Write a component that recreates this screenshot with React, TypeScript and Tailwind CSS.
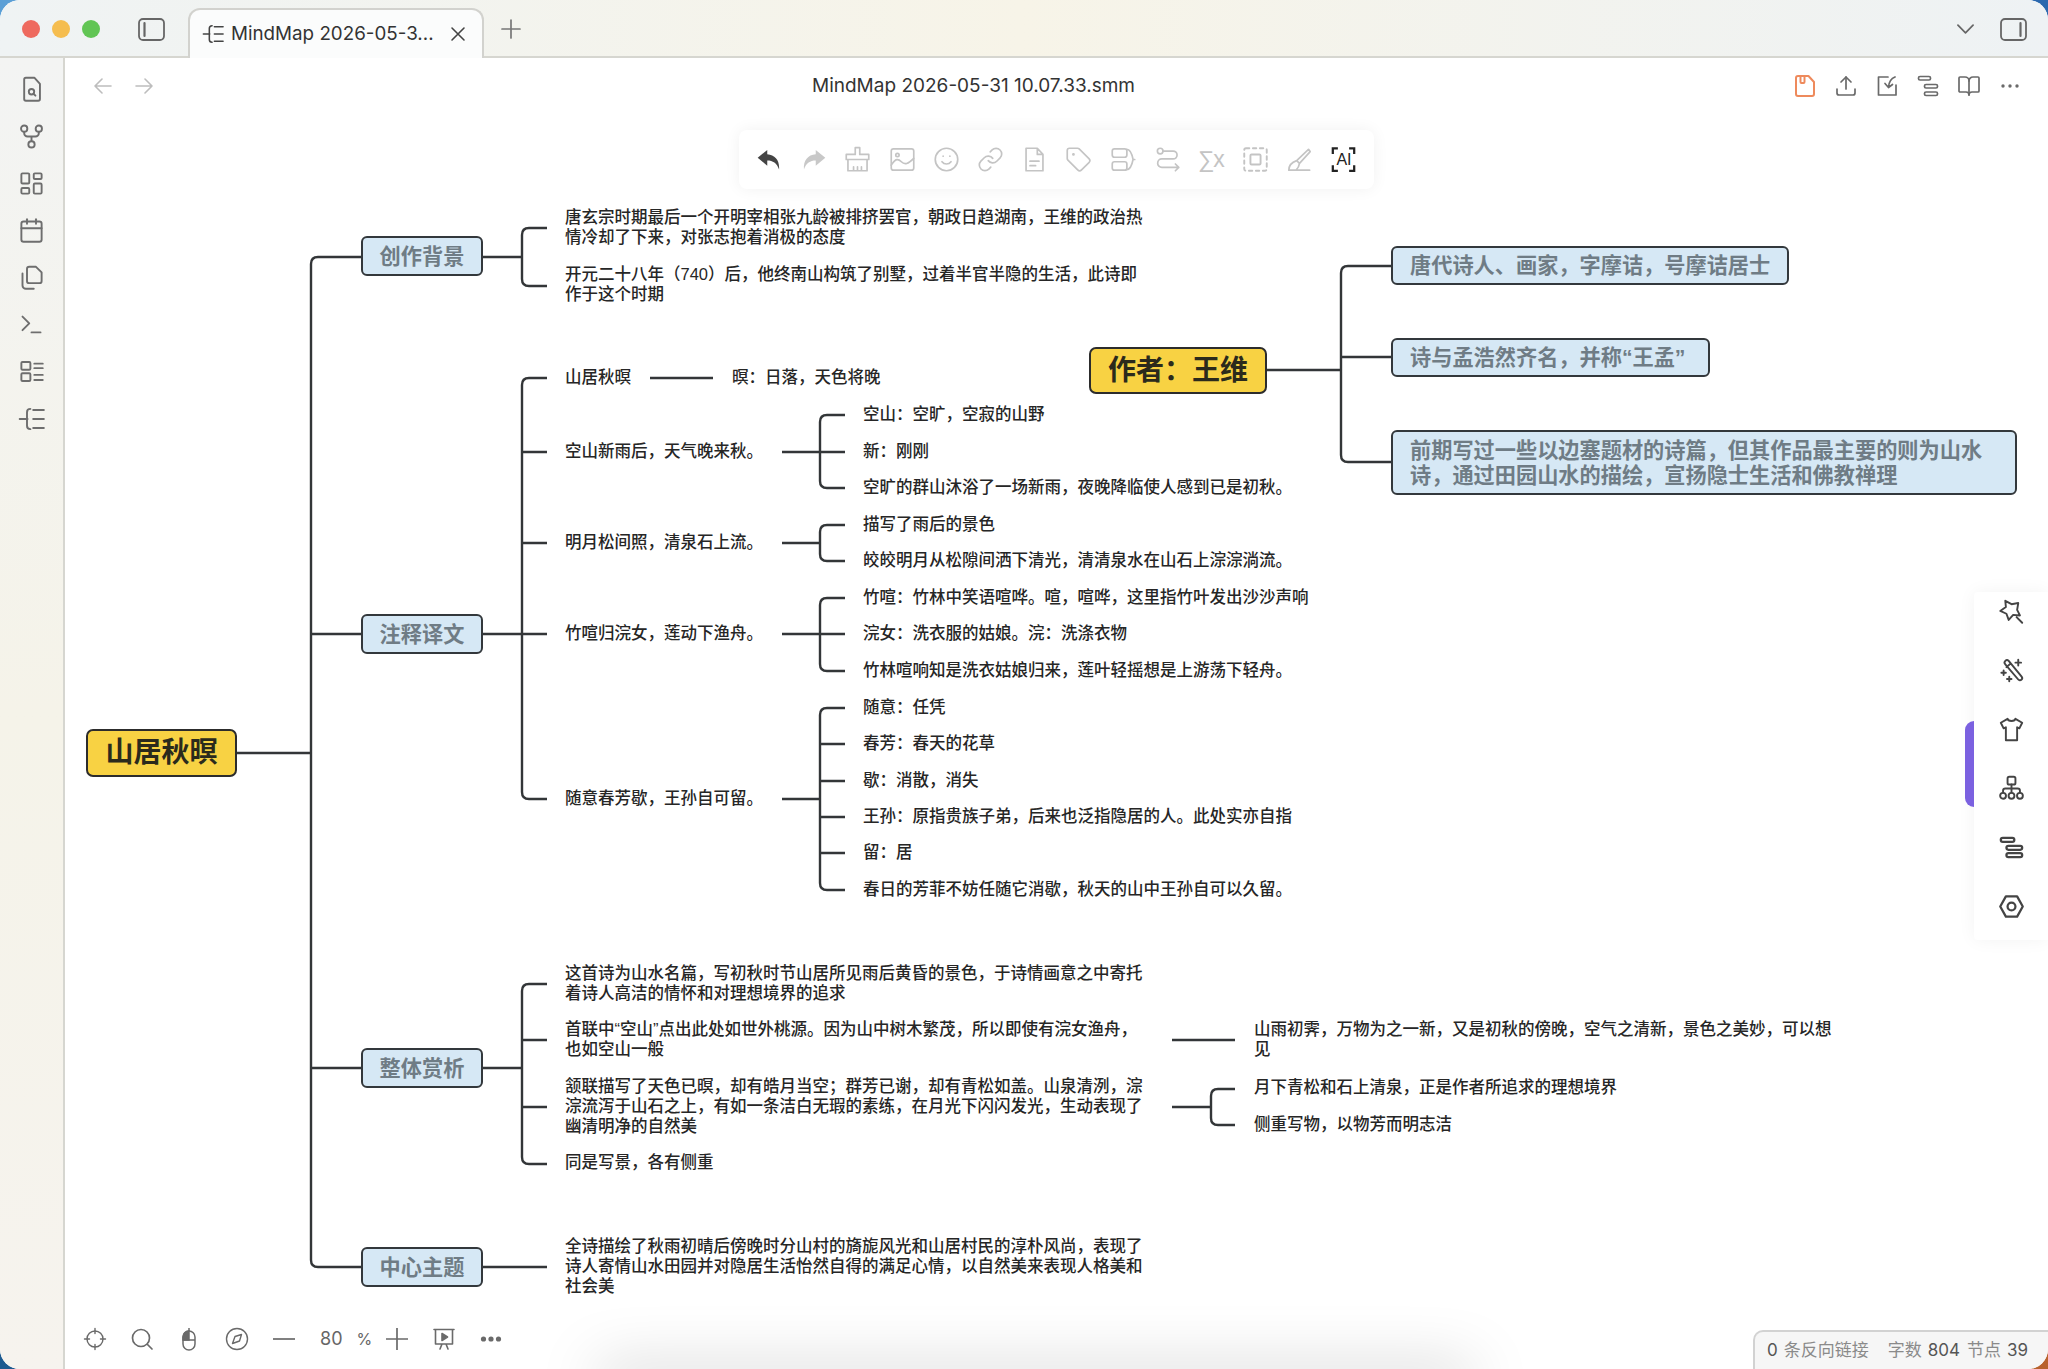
import { ReactNode } from "react";
import { BookOpen, Calendar, LayoutDashboard, Link, Smile, Tag, Terminal, Upload } from "lucide-react";

const Ic = ({ className, sw = 1.7, children }: { className?: string; sw?: number; children: ReactNode }) => (
  <svg viewBox="0 0 24 24" fill="none" stroke="currentColor" strokeWidth={sw} strokeLinecap="round" strokeLinejoin="round" className={className}>
    {children}
  </svg>
);

const MindIcon = ({ className }: { className?: string }) => (
  <Ic className={className}>
    <path d="M1.500 12h7M11 3c-2 0-3 1-3 3v12c0 2 1 3 3 3M13.500 4H23M13.500 12H23M13.500 20H23" />
  </Ic>
);

const sideIcon = "w-[27px] h-[27px]";
const sideItems = [
  <Ic className={sideIcon}>
    <path d="M7 1.500h7.500L19.500 7V20.500a1.500 1.500 0 0 1-1.500 1.500H7A1.500 1.500 0 0 1 5.500 20.500V3A1.500 1.500 0 0 1 7 1.500z" />
    <circle cx="12" cy="14" r="2.400" />
    <path d="M14 16l1.500 1.500" />
  </Ic>,
  <Ic className={sideIcon}>
    <circle cx="5.500" cy="5" r="2.800" />
    <circle cx="18.500" cy="5" r="2.800" />
    <circle cx="12" cy="19" r="2.800" />
    <path d="M5.500 8v1a3 3 0 0 0 3 3h7a3 3 0 0 0 3-3V8M12 12v4" />
  </Ic>,
  <LayoutDashboard className={sideIcon} strokeWidth={1.7} />,
  <Calendar className={sideIcon} strokeWidth={1.7} />,
  <Ic className={sideIcon}>
    <path d="M4 8.500V19a3 3 0 0 0 3 3h7" />
    <path d="M10 2.500h6l5 5V15a2 2 0 0 1-2 2h-9a2 2 0 0 1-2-2V4.500a2 2 0 0 1 2-2z" />
  </Ic>,
  <Terminal className={sideIcon} strokeWidth={1.7} />,
  <Ic className={sideIcon}>
    <rect x="3" y="3.500" width="8" height="7" rx="1" />
    <rect x="3" y="13.500" width="8" height="7" rx="1" />
    <path d="M14.500 5H22M14.500 9H22M14.500 15H22M14.500 19.500H22" />
  </Ic>,
  <MindIcon className="w-[28px] h-[28px]" />,
];

const tool = "w-[27px] h-[27px]";
const toolItems: { key: string; cls: string; el: ReactNode }[] = [
  {
    key: "undo",
    cls: "text-[#444444]",
    el: (
      <svg viewBox="0 0 24 24" className={tool} fill="currentColor">
        <path d="M10 3.500 1.500 10.500 10 17.500v-4.600c5 0 8.500 2.200 10.500 8 .6-8-3.500-13-10.500-13.500z" />
      </svg>
    ),
  },
  {
    key: "redo",
    cls: "text-[#c8c8c8]",
    el: (
      <svg viewBox="0 0 24 24" className={tool} fill="currentColor">
        <path d="M14 3.500 22.500 10.500 14 17.500v-4.600c-5 0-8.500 2.200-10.500 8C2.900 12.900 7 7.900 14 7.400z" />
      </svg>
    ),
  },
  {
    key: "brush",
    cls: "text-[#c4c4c4]",
    el: (
      <Ic className={tool} sw={1.5}>
        <path d="M10 1.500h4V7.500h8V12H2V7.500h8zM3.500 12v10h17V12M8.500 22v-3.500M12 22v-3.500M15.500 22v-3.500" />
      </Ic>
    ),
  },
  {
    key: "image",
    cls: "text-[#c4c4c4]",
    el: (
      <Ic className={tool} sw={1.5}>
        <rect x="2" y="2.500" width="20" height="19" rx="2" />
        <circle cx="7.500" cy="8" r="1.500" />
        <path d="M2 17c4-6 6-6 9-3s6 2 11-3" />
      </Ic>
    ),
  },
  { key: "smile", cls: "text-[#c4c4c4]", el: <Smile className={tool} strokeWidth={1.5} /> },
  { key: "link", cls: "text-[#c4c4c4]", el: <Link className={tool} strokeWidth={1.5} /> },
  {
    key: "file",
    cls: "text-[#c4c4c4]",
    el: (
      <Ic className={tool} sw={1.5}>
        <path d="M4.500 2h10l5 5.500V22h-15zM14.500 2v5.500h5M8 13.500h8M8 17.500h5" />
      </Ic>
    ),
  },
  { key: "tag", cls: "text-[#c4c4c4]", el: <Tag className={tool} strokeWidth={1.5} /> },
  {
    key: "summary",
    cls: "text-[#c4c4c4]",
    el: (
      <Ic className={tool} sw={1.5}>
        <rect x="2" y="2.500" width="13" height="7.500" rx="2" />
        <rect x="2" y="14" width="13" height="7.500" rx="2" />
        <path d="M15 3c3 0 4.500 4 5.500 9-1 5-2.500 9-5.500 9M20.500 12h1.500" />
      </Ic>
    ),
  },
  {
    key: "relation",
    cls: "text-[#c4c4c4]",
    el: (
      <Ic className={tool} sw={1.5}>
        <circle cx="5.500" cy="4.500" r="2.500" />
        <path d="M8 4.500h9a3.500 3.500 0 0 1 0 7H7a3.500 3.500 0 0 0 0 7.500h15M19 16l3 3-3 3" />
      </Ic>
    ),
  },
  {
    key: "formula",
    cls: "text-[#c4c4c4]",
    el: <span className="w-[27px] text-[23px] leading-[27px] font-['Liberation_Sans',sans-serif] font-light tracking-[-1px] whitespace-nowrap">∑x</span>,
  },
  {
    key: "select",
    cls: "text-[#c4c4c4]",
    el: (
      <Ic className={tool} sw={1.7}>
        <rect x="2" y="2" width="20" height="20" rx="1.500" strokeDasharray="3 3.200" />
        <rect x="7.500" y="7.500" width="9" height="9" rx="1" />
      </Ic>
    ),
  },
  {
    key: "pen",
    cls: "text-[#c4c4c4]",
    el: (
      <Ic className={tool} sw={1.5}>
        <path d="M20 3 9.500 13l2.500 2.500L21.500 5zM2.500 21.500c0-4 2.500-7 7-8.500l2.500 2.500c-.5 3-2 5-3 6zM2.500 21.500H21" />
      </Ic>
    ),
  },
  {
    key: "ai",
    cls: "text-[#222222]",
    el: (
      <div className="relative flex w-[27px] h-[27px] items-center justify-center">
        <svg viewBox="0 0 24 24" className="absolute inset-0 w-[27px] h-[27px]" fill="none" stroke="currentColor" strokeWidth="2">
          <path d="M7 2H2.500v5M17 2h4.500v5M7 22H2.500v-5M17 22h4.500v-5" />
        </svg>
        <span className="text-[16px] leading-none font-['Liberation_Sans',sans-serif]">AI</span>
      </div>
    ),
  },
];

const leaves: { x: number; y: number; lines: string[] }[] = [
  { x: 565, y: 228, lines: ["唐玄宗时期最后一个开明宰相张九龄被排挤罢官，朝政日趋湖南，王维的政治热", "情冷却了下来，对张志抱着消极的态度"] },
  { x: 565, y: 285, lines: ["开元二十八年（740）后，他终南山构筑了别墅，过着半官半隐的生活，此诗即", "作于这个时期"] },
  { x: 565, y: 378, lines: ["山居秋暝"] },
  { x: 732, y: 378, lines: ["暝：日落，天色将晚"] },
  { x: 565, y: 452, lines: ["空山新雨后，天气晚来秋。"] },
  { x: 863, y: 415, lines: ["空山：空旷，空寂的山野"] },
  { x: 863, y: 452, lines: ["新：刚刚"] },
  { x: 863, y: 488, lines: ["空旷的群山沐浴了一场新雨，夜晚降临使人感到已是初秋。"] },
  { x: 565, y: 543, lines: ["明月松间照，清泉石上流。"] },
  { x: 863, y: 525, lines: ["描写了雨后的景色"] },
  { x: 863, y: 561, lines: ["皎皎明月从松隙间洒下清光，清清泉水在山石上淙淙淌流。"] },
  { x: 565, y: 634, lines: ["竹喧归浣女，莲动下渔舟。"] },
  { x: 863, y: 598, lines: ["竹喧：竹林中笑语喧哗。喧，喧哗，这里指竹叶发出沙沙声响"] },
  { x: 863, y: 634, lines: ["浣女：洗衣服的姑娘。浣：洗涤衣物"] },
  { x: 863, y: 671, lines: ["竹林喧响知是洗衣姑娘归来，莲叶轻摇想是上游荡下轻舟。"] },
  { x: 565, y: 799, lines: ["随意春芳歇，王孙自可留。"] },
  { x: 863, y: 708, lines: ["随意：任凭"] },
  { x: 863, y: 744, lines: ["春芳：春天的花草"] },
  { x: 863, y: 781, lines: ["歇：消散，消失"] },
  { x: 863, y: 817, lines: ["王孙：原指贵族子弟，后来也泛指隐居的人。此处实亦自指"] },
  { x: 863, y: 853, lines: ["留：居"] },
  { x: 863, y: 890, lines: ["春日的芳菲不妨任随它消歇，秋天的山中王孙自可以久留。"] },
  { x: 565, y: 984, lines: ["这首诗为山水名篇，写初秋时节山居所见雨后黄昏的景色，于诗情画意之中寄托", "着诗人高洁的情怀和对理想境界的追求"] },
  { x: 565, y: 1040, lines: ["首联中“空山”点出此处如世外桃源。因为山中树木繁茂，所以即使有浣女渔舟，", "也如空山一般"] },
  { x: 565, y: 1107, lines: ["颔联描写了天色已暝，却有皓月当空；群芳已谢，却有青松如盖。山泉清洌，淙", "淙流泻于山石之上，有如一条洁白无瑕的素练，在月光下闪闪发光，生动表现了", "幽清明净的自然美"] },
  { x: 565, y: 1163, lines: ["同是写景，各有侧重"] },
  { x: 1254, y: 1040, lines: ["山雨初霁，万物为之一新，又是初秋的傍晚，空气之清新，景色之美妙，可以想", "见"] },
  { x: 1254, y: 1088, lines: ["月下青松和石上清泉，正是作者所追求的理想境界"] },
  { x: 1254, y: 1125, lines: ["侧重写物，以物芳而明志洁"] },
  { x: 565, y: 1267, lines: ["全诗描绘了秋雨初晴后傍晚时分山村的旖旎风光和山居村民的淳朴风尚，表现了", "诗人寄情山水田园并对隐居生活怡然自得的满足心情，以自然美来表现人格美和", "社会美"] },
];

const boxes: { x: number; y: number; w: number; h: number; lines: string[] }[] = [
  { x: 361, y: 236, w: 122, h: 40, lines: ["创作背景"] },
  { x: 361, y: 614, w: 122, h: 40, lines: ["注释译文"] },
  { x: 361, y: 1048, w: 122, h: 40, lines: ["整体赏析"] },
  { x: 361, y: 1247, w: 122, h: 40, lines: ["中心主题"] },
  { x: 1391, y: 246, w: 398, h: 39, lines: ["唐代诗人、画家，字摩诘，号摩诘居士"] },
  { x: 1391, y: 338, w: 319, h: 39, lines: ["诗与孟浩然齐名，并称“王孟”"] },
  { x: 1391, y: 430, w: 626, h: 65, lines: ["前期写过一些以边塞题材的诗篇，但其作品最主要的则为山水", "诗，通过田园山水的描绘，宣扬隐士生活和佛教禅理"] },
];

const roots: { x: number; y: number; w: number; h: number; text: string }[] = [
  { x: 86, y: 729, w: 151, h: 48, text: "山居秋暝" },
  { x: 1089, y: 347, w: 178, h: 47, text: "作者：王维" },
];

// parent line plus rounded bracket to its children
const bracket = (from: number, trunk: number, to: number, mid: number, ys: number[]) => {
  const r = 7;
  const top = ys[0];
  const bottom = ys[ys.length - 1];
  let d = `M${from} ${mid}H${trunk}`;
  if (ys.length > 1) {
    d += `M${to} ${top}H${trunk + r}Q${trunk} ${top} ${trunk} ${top + r}V${bottom - r}Q${trunk} ${bottom} ${trunk + r} ${bottom}H${to}`;
    ys.slice(1, -1).forEach((y) => {
      d += `M${trunk} ${y}H${to}`;
    });
  } else {
    d += `H${to}`;
  }
  return d;
};

const links = [
  bracket(237, 311, 361, 753, [257, 634, 1068, 1267]),
  bracket(1267, 1341, 1391, 370, [266, 357, 462]),
  bracket(483, 522, 547, 257, [228, 286]),
  bracket(483, 522, 547, 634, [378, 452, 543, 634, 799]),
  bracket(483, 522, 547, 1068, [984, 1040, 1107, 1164]),
  bracket(483, 522, 547, 1267, [1267]),
  bracket(782, 820, 845, 452, [415, 452, 488]),
  bracket(782, 820, 845, 543, [525, 561]),
  bracket(782, 820, 845, 634, [598, 634, 671]),
  bracket(782, 820, 845, 799, [708, 744, 781, 817, 853, 890]),
  bracket(1172, 1211, 1235, 1107, [1089, 1125]),
  "M650 378H713",
  "M1172 1040H1235",
];

const cjk = "font-['Liberation_Sans','Noto_Sans_CJK_SC',sans-serif]";

const MindCanvas = () => (
  <div className={`absolute inset-0 ${cjk}`}>
    <svg className="absolute inset-0 w-full h-full" viewBox="66 58 1982 1311" fill="none" stroke="#333638" strokeWidth="2.4">
      {links.map((d, i) => (
        <path key={i} d={d} />
      ))}
    </svg>
    {roots.map((n) => (
      <div
        key={n.text}
        className="absolute flex items-center justify-center rounded-[7px] border-[2px] border-[#2c2c2c] bg-[#f8d243] text-[28px] font-bold text-[#2b2a1c]"
        style={{ left: n.x - 66, top: n.y - 58, width: n.w, height: n.h }}
      >
        {n.text}
      </div>
    ))}
    {boxes.map((n) => (
      <div
        key={n.lines[0]}
        className={`absolute flex flex-col justify-center whitespace-nowrap rounded-[6px] border-[2px] border-[#33383c] bg-[#d6e8f5] text-[21.200px] font-bold leading-[25px] text-[#6f7c85] ${n.w === 122 ? "items-center" : "items-start pl-[17px]"}`}
        style={{ left: n.x - 66, top: n.y - 58, width: n.w, height: n.h }}
      >
        {n.lines.map((l) => (
          <span key={l}>{l}</span>
        ))}
      </div>
    ))}
    {leaves.map((n) => (
      <div
        key={n.lines[0]}
        className="absolute -translate-y-1/2 whitespace-nowrap text-[16.500px] font-medium leading-[20px] text-[#262626]"
        style={{ left: n.x - 66, top: n.y - 59 }}
      >
        {n.lines.map((l) => (
          <div key={l}>{l}</div>
        ))}
      </div>
    ))}
  </div>
);

const bottomIcon = "w-[24px] h-[24px]";

export default function App() {
  return (
    <div className="relative h-[1369px] w-[2048px] overflow-hidden">
      <div className="absolute inset-0 grid grid-cols-2 grid-rows-2">
        <div className="bg-[#5b9fd6]" />
        <div className="bg-[#2a68ae]" />
        <div className="bg-[#1d5a90]" />
        <div className="bg-[#b8622e]" />
      </div>
      <div className="relative flex h-full w-full flex-col overflow-hidden rounded-[20px] bg-white">
        {/* title bar */}
        <div className="flex h-[58px] shrink-0 items-center border-b-[2px] border-[#d6d6d0] bg-gradient-to-r from-[#eff3f4] via-[#f7f4e8] to-[#eef2f4] pt-[2px]">
          <div className="ml-[22px] flex gap-[12px]">
            <span className="h-[18px] w-[18px] rounded-full bg-[#ee6a5f]" />
            <span className="h-[18px] w-[18px] rounded-full bg-[#f5bd4f]" />
            <span className="h-[18px] w-[18px] rounded-full bg-[#61c554]" />
          </div>
          <svg viewBox="0 0 27 23" fill="none" stroke="#666666" strokeWidth="1.800" className="ml-[38px] h-[23px] w-[27px]">
            <rect x="1" y="1" width="25" height="21" rx="4" />
            <path d="M6.500 5v13" strokeWidth="2.200" strokeLinecap="round" />
          </svg>
          <div className="ml-[23px] mb-[-2px] flex h-[50px] w-[296px] items-center self-end rounded-t-[12px] border-[2px] border-b-0 border-[#d2d2ce] bg-[#fbfcfc] pl-[12px]">
            <MindIcon className="h-[22px] w-[22px] text-[#444444]" />
            <span className="ml-[7px] whitespace-nowrap font-['Inter',sans-serif] text-[18.800px] text-[#333333]">MindMap 2026-05-3...</span>
            <svg viewBox="0 0 16 16" fill="none" stroke="#444444" strokeWidth="1.600" strokeLinecap="round" className="ml-auto mr-[16px] h-[16px] w-[16px]">
              <path d="M2 2l12 12M14 2 2 14" />
            </svg>
          </div>
          <svg viewBox="0 0 20 20" fill="none" stroke="#777777" strokeWidth="1.700" strokeLinecap="round" className="ml-[17px] h-[20px] w-[20px]">
            <path d="M10 1v18M1 10h18" />
          </svg>
          <svg viewBox="0 0 18 10" fill="none" stroke="#666666" strokeWidth="1.800" strokeLinecap="round" strokeLinejoin="round" className="ml-auto h-[10px] w-[17px]">
            <path d="M1 1l8 8 8-8" />
          </svg>
          <svg viewBox="0 0 27 23" fill="none" stroke="#666666" strokeWidth="1.800" className="ml-[26px] mr-[21px] h-[23px] w-[27px]">
            <rect x="1" y="1" width="25" height="21" rx="4" />
            <path d="M20.500 5v13" strokeWidth="2.200" strokeLinecap="round" />
          </svg>
        </div>

        <div className="flex min-h-0 flex-1">
          {/* left rail */}
          <div className="flex w-[65px] shrink-0 flex-col items-center gap-[20px] border-r-[2px] border-[#d6d6d0] bg-gradient-to-b from-[#f3f4f3] via-[#f5f3e9] to-[#f6f3ee] pt-[18px] text-[#6e6e6e]">
            {sideItems.map((el, i) => (
              <div key={i} className="flex h-[27px] w-[27px] items-center justify-center">
                {el}
              </div>
            ))}
          </div>

          {/* main */}
          <div className="relative min-w-0 flex-1">
            <div className="absolute inset-y-0 left-[1px] right-0">
              <MindCanvas />
            </div>

            <div className="relative flex h-[56px] items-center">
              <svg viewBox="0 0 18 16" fill="none" stroke="#bdbdbd" strokeWidth="1.600" strokeLinecap="round" strokeLinejoin="round" className="ml-[29px] h-[16px] w-[18px]">
                <path d="M17 8H1M8 1 1 8l7 7" />
              </svg>
              <svg viewBox="0 0 18 16" fill="none" stroke="#bdbdbd" strokeWidth="1.600" strokeLinecap="round" strokeLinejoin="round" className="ml-[23px] h-[16px] w-[18px]">
                <path d="M1 8h16M10 1l7 7-7 7" />
              </svg>
              <div className="absolute left-[747px] mt-[1px] whitespace-nowrap font-['Inter',sans-serif] text-[19px] text-[#333333]">MindMap 2026-05-31 10.07.33.smm</div>
              <div className="ml-auto mr-[26px] flex items-center gap-[17px] text-[#6a6a6a]">
                <svg viewBox="0 0 24 24" fill="none" stroke="#ee8a5c" strokeWidth="2" strokeLinejoin="round" className="h-[24px] w-[24px]">
                  <path d="M5 2h10.500L21 8v12a2 2 0 0 1-2 2H5a2 2 0 0 1-2-2V4a2 2 0 0 1 2-2z" />
                  <path d="M7.500 2.500V8a1 1 0 0 0 1 1h2a1 1 0 0 0 1-1V2.500" />
                </svg>
                <Upload className="h-[24px] w-[24px]" strokeWidth={1.7} />
                <Ic className="h-[24px] w-[24px]">
                  <path d="M13 3H3.500v18H21V11" />
                  <path d="M20 3c-4 1.500-6 5-6.500 10M10 9.500l3.500 4 4-3" />
                </Ic>
                <Ic className="h-[24px] w-[24px]">
                  <rect x="2.500" y="2.500" width="12" height="3.500" rx="1.500" />
                  <rect x="8.500" y="10.500" width="13" height="3.500" rx="1.500" />
                  <rect x="8.500" y="18" width="13" height="3.500" rx="1.500" />
                </Ic>
                <BookOpen className="h-[24px] w-[24px]" strokeWidth={1.7} />
                <svg viewBox="0 0 24 24" fill="currentColor" className="h-[24px] w-[24px]">
                  <circle cx="5" cy="12" r="1.700" />
                  <circle cx="12" cy="12" r="1.700" />
                  <circle cx="19" cy="12" r="1.700" />
                </svg>
              </div>
            </div>

            {/* floating toolbar */}
            <div className="absolute left-[674px] top-[72px] flex h-[59px] w-[635px] items-center gap-[17.200px] rounded-[8px] bg-white pl-[17px] shadow-[0_0_16px_rgba(0,0,0,0.06)]">
              {toolItems.map((t) => (
                <div key={t.key} className={`flex h-[27px] w-[27px] items-center justify-center ${t.cls}`}>
                  {t.el}
                </div>
              ))}
            </div>

            {/* right panel */}
            <div className="absolute right-0 top-[534px] flex h-[348px] w-[74px] flex-col items-center gap-[32px] rounded-l-[4px] bg-white pt-[6px] text-[#444444] shadow-[0_0_18px_rgba(0,0,0,0.05)]">
              <div className="absolute left-[-9px] top-[129px] h-[86px] w-[9px] rounded-l-[9px] bg-[#7b61e0]" />
              <Ic className="h-[27px] w-[27px]">
                <path d="M6.500 2.500l5.500 3 6-1 -1 6 2.500 5-6-.5-4 4.500-2-5.500-5.500-2.500 5-3.500zM16.500 17l5 5" />
              </Ic>
              <Ic className="h-[27px] w-[27px]">
                <path d="M9.500 3.500 21 17.500a1.800 1.800 0 0 1-3 2.500L6.500 6.500a1.800 1.800 0 0 1 3-3zM7.500 9l3.500-3" />
                <path d="M18 2.500v5M15.500 5h5M5 12v4M3 14h4M10 17.500v4M8 19.500h4" />
              </Ic>
              <Ic className="h-[27px] w-[27px]">
                <path d="M8.500 2.500c.5 2.500 6.500 2.500 7 0l6 3.500-2.500 5-2-1V21.500H7V10l-2 1-2.500-5z" />
              </Ic>
              <Ic className="h-[27px] w-[27px]">
                <rect x="8.500" y="1.500" width="7" height="7" rx="1.500" />
                <path d="M12 8.500V12M4.500 15.500V14a2 2 0 0 1 2-2h11a2 2 0 0 1 2 2v1.500M12 12v3.500" />
                <circle cx="4.500" cy="18.500" r="2.600" />
                <circle cx="12" cy="18.500" r="2.600" />
                <circle cx="19.500" cy="18.500" r="2.600" />
              </Ic>
              <Ic className="h-[27px] w-[27px]" sw={2}>
                <rect x="2.500" y="3.500" width="12" height="3.500" rx="1.700" />
                <rect x="7.500" y="10.500" width="14" height="3.500" rx="1.700" />
                <rect x="7.500" y="17" width="14" height="3.500" rx="1.700" />
              </Ic>
              <Ic className="h-[27px] w-[27px]" sw={2}>
                <path d="M7 3h10l5 9-5 9H7l-5-9z" />
                <circle cx="12" cy="12" r="3.500" />
              </Ic>
            </div>

            {/* zoom controls */}
            <div className="absolute bottom-[18px] left-[18px] flex items-center text-[#6a6a6a]">
              <Ic className={bottomIcon} sw={1.4}>
                <circle cx="12" cy="12" r="8" />
                <path d="M12 1.500v5M12 17.500v5M1.500 12h5M17.500 12h5" />
              </Ic>
              <Ic className={`${bottomIcon} ml-[23px]`} sw={1.7}>
                <circle cx="11" cy="11" r="8.500" />
                <path d="M17.500 17.500 22 22" />
              </Ic>
              <svg viewBox="0 0 24 24" fill="none" stroke="currentColor" strokeWidth="1.500" className={`${bottomIcon} ml-[23px]`}>
                <rect x="6" y="4" width="12" height="19" rx="6" />
                <path d="M12 4a6 6 0 0 0-6 6v3h6z" fill="currentColor" />
                <path d="M6 13h12M12 4V1" />
              </svg>
              <Ic className={`${bottomIcon} ml-[24px]`} sw={1.4}>
                <circle cx="12" cy="12" r="10.500" />
                <path d="M16.500 7.500l-2 6.500-7 2.500 2.500-7z" />
              </Ic>
              <svg viewBox="0 0 24 24" stroke="currentColor" strokeWidth="1.700" className={`${bottomIcon} ml-[23px]`}>
                <path d="M1 12h22" />
              </svg>
              <span className="ml-[24px] font-['Inter',sans-serif] text-[18px] leading-none text-[#666666]">80</span>
              <span className="ml-[14px] font-['Inter',sans-serif] text-[16px] leading-none text-[#666666]">%</span>
              <svg viewBox="0 0 24 24" stroke="currentColor" strokeWidth="1.700" className={`${bottomIcon} ml-[13px]`}>
                <path d="M1 12h22M12 1v22" />
              </svg>
              <Ic className={`${bottomIcon} ml-[23px]`} sw={1.6}>
                <path d="M2 2.500h20M3.500 2.500V17h17V2.500M8 22l2-5M16 22l-2-5" />
                <path d="M10 6.500l5.500 3.500-5.500 3.500z" fill="currentColor" />
              </Ic>
              <svg viewBox="0 0 24 24" fill="currentColor" className={`${bottomIcon} ml-[23px]`}>
                <circle cx="4.500" cy="12" r="2.600" />
                <circle cx="12" cy="12" r="2.600" />
                <circle cx="19.500" cy="12" r="2.600" />
              </svg>
            </div>

            {/* faint shadow along the bottom edge */}
            <div className="absolute bottom-[-20px] left-[530px] h-[20px] w-[880px] rounded-[10px] shadow-[0_0_60px_rgba(0,0,0,0.26)]" />

            {/* status */}
            <div className="absolute bottom-0 right-0 flex h-[39px] w-[295px] items-center whitespace-nowrap rounded-tl-[10px] border-l-[2px] border-t-[2px] border-[#d2d2d2] bg-[#f6f6f6] pl-[12px] font-['Inter','Noto_Sans_CJK_SC',sans-serif] text-[17px] text-[#8a8a8a]">
              <span className="text-[#555555]">0</span>
              <span className="ml-[6px]">条反向链接</span>
              <span className="ml-[19px]">字数</span>
              <span className="ml-[6px] text-[#555555]">804</span>
              <span className="ml-[7px]">节点</span>
              <span className="ml-[6px] text-[#555555]">39</span>
            </div>
          </div>
        </div>
      </div>
    </div>
  );
}
